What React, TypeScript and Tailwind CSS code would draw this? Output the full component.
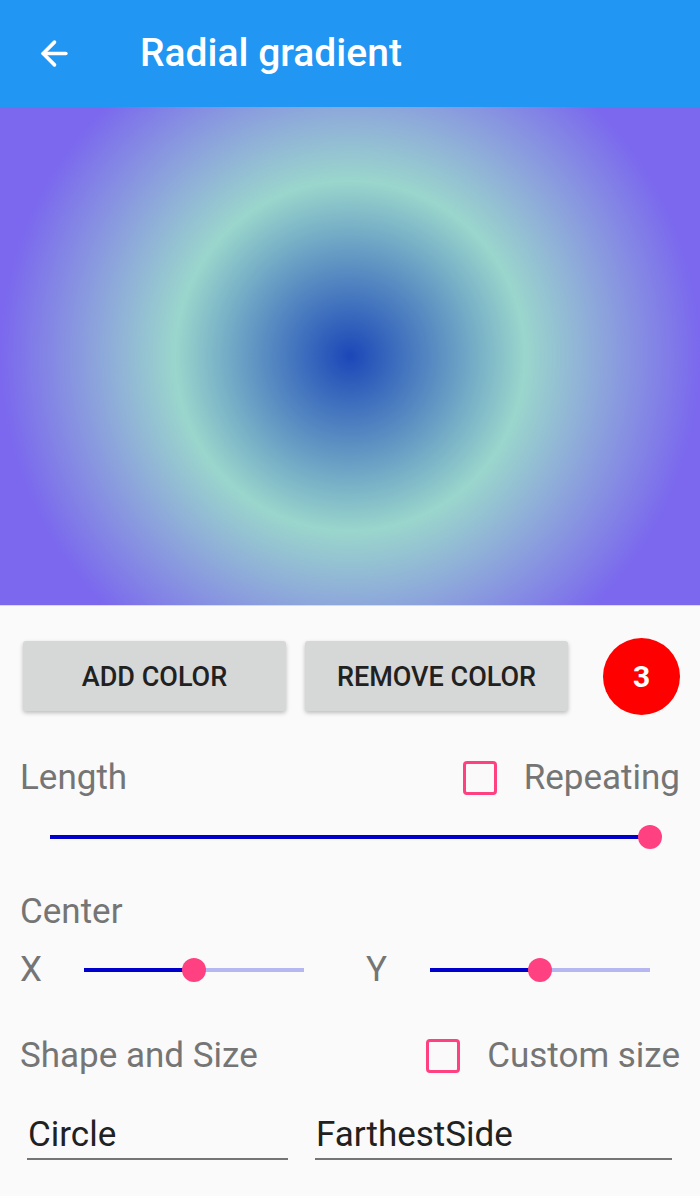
import { ArrowLeft } from 'lucide-react';

const font = { fontFamily: 'Roboto, "Noto Sans", sans-serif' };

function Checkbox() {
  return <div className="w-[34px] h-[34px] rounded-[4px] border-[3px] border-[#ff4081] shrink-0" />;
}

function Slider({ value }: { value: number }) {
  return (
    <div className="relative w-full h-[4px] bg-[#b6b6f0]">
      <div className="absolute left-0 top-0 h-full bg-[#0000cd]" style={{ width: `${value}%` }} />
      <div
        className="absolute top-1/2 w-[24px] h-[24px] -ml-[12px] -mt-[12px] rounded-full bg-[#ff4081]"
        style={{ left: `${value}%` }}
      />
    </div>
  );
}

export default function App() {
  return (
    <div className="w-[700px] h-[1196px] bg-[#fafafa] overflow-hidden" style={font}>
      <div className="h-[107px] bg-[#2196f3] flex items-center">
        <ArrowLeft className="ml-[35px] text-white" size={39} strokeWidth={2.2} />
        <h1 className="ml-[66px] text-white text-[39px] font-medium leading-none">Radial gradient</h1>
      </div>

      <div className="h-[499px] bg-[radial-gradient(circle_farthest-side_at_50%_50%,#1b47b8_0%,#9ad6cc_50%,#7b68ee_100%)] border-b border-[#d8d8e8]" />

      <div className="px-5">
        <div className="mt-[31px] h-[78px] flex items-center pl-[3px]">
          <button className="w-[263px] h-[70px] pt-[3px] bg-[#d6d7d7] rounded-[3px] shadow-[0_2px_4px_rgba(0,0,0,0.25)] text-[#212121] text-[27px] font-medium">
            ADD COLOR
          </button>
          <button className="ml-[19px] w-[263px] h-[70px] pt-[3px] bg-[#d6d7d7] rounded-[3px] shadow-[0_2px_4px_rgba(0,0,0,0.25)] text-[#212121] text-[27px] font-medium">
            REMOVE COLOR
          </button>
          <div className="ml-[35px] w-[77px] h-[77px] rounded-full bg-[#ff0000] flex items-center justify-center text-white text-[30px] font-bold">
            3
          </div>
        </div>

        <div className="mt-[43px] h-[40px] flex items-center text-[35px] leading-[40px] text-[#757575]">
          <span>Length</span>
          <div className="ml-auto flex items-center">
            <Checkbox />
            <span className="ml-[27px]">Repeating</span>
          </div>
        </div>

        <div className="mt-[19px] h-[40px] flex items-center px-[30px]">
          <Slider value={100} />
        </div>

        <div className="mt-[35px] h-[40px] flex items-center text-[35px] leading-[40px] text-[#757575]">
          Center
        </div>

        <div className="mt-[18px] h-[40px] flex items-center text-[35px] leading-[40px] text-[#757575]">
          <span className="w-[64px]">X</span>
          <div className="w-[220px]">
            <Slider value={50} />
          </div>
          <span className="ml-[62px] w-[64px]">Y</span>
          <div className="w-[220px]">
            <Slider value={50} />
          </div>
        </div>

        <div className="mt-[46px] h-[40px] flex items-center text-[35px] leading-[40px] text-[#757575]">
          <span>Shape and Size</span>
          <div className="ml-auto flex items-center">
            <Checkbox />
            <span className="ml-[27px]">Custom size</span>
          </div>
        </div>

        <div className="mt-[36px] flex text-[35px] text-[#212121]">
          <div className="ml-[7px] w-[261px] h-[48px] border-b-2 border-[#757575] flex items-center pl-[1px] leading-[40px]">
            Circle
          </div>
          <div className="ml-[27px] w-[357px] h-[48px] border-b-2 border-[#757575] flex items-center pl-[1px] leading-[40px]">
            FarthestSide
          </div>
        </div>
      </div>
    </div>
  );
}
